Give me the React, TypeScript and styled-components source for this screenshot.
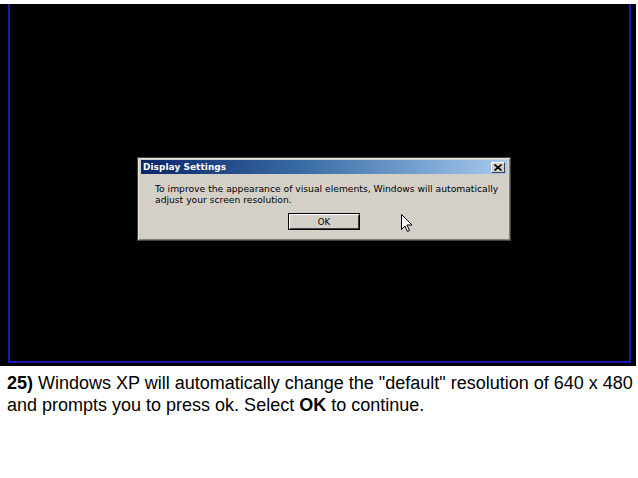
import styled, { createGlobalStyle } from 'styled-components';

const GlobalStyle = createGlobalStyle`
  html, body {
    margin: 0;
    padding: 0;
    background: #ffffff;
  }
  body {
    font-family: "Liberation Sans", Arial, sans-serif;
  }
`;

const Page = styled.div`
  width: 638px;
  height: 478px;
  padding-top: 4px;
  box-sizing: border-box;
  background: #ffffff;
`;

const Screen = styled.div`
  width: 636px;
  height: 362px;
  background: #000000;
  padding: 0 5px 3px 8px;
  box-sizing: border-box;
  display: flex;
`;

const Frame = styled.div`
  flex: 1;
  border: 2px solid #1a1ab0;
  border-top: none;
  padding: 153px 0 0 127px;
  box-sizing: border-box;
`;

const Dialog = styled.div`
  position: relative;
  width: 374px;
  height: 84px;
  box-sizing: border-box;
  background: #d4d0c8;
  border: 1px solid #404040;
  box-shadow: inset 1px 1px 0 #e8e6e0, inset -1px -1px 0 #808080;
  padding: 2px 3px;
  display: flex;
  flex-direction: column;
`;

const TitleBar = styled.div`
  height: 14px;
  background: linear-gradient(90deg, #0a246a 0%, #3a6ea5 45%, #a6caf0 100%);
  display: flex;
  align-items: center;
  justify-content: space-between;
  padding: 0 2px 0 2px;
`;

const Title = styled.span`
  color: #ffffff;
  font-family: "DejaVu Sans", Verdana, sans-serif;
  font-weight: bold;
  font-size: 8.9px;
  letter-spacing: 0.1px;
`;

const CloseButton = styled.div`
  width: 14px;
  height: 11px;
  box-sizing: border-box;
  background: #d4d0c8;
  border: 1px solid #404040;
  border-top-color: #ffffff;
  border-left-color: #ffffff;
  display: flex;
  align-items: center;
  justify-content: center;
`;

const Message = styled.p`
  margin: 9px 0 0 14px;
  font-family: "DejaVu Sans", Verdana, sans-serif;
  font-size: 9.2px;
  line-height: 11px;
  color: #000000;
  white-space: nowrap;
`;

const ButtonRow = styled.div`
  display: flex;
  justify-content: flex-start;
  padding-left: 147px;
  margin-top: 8px;
`;

const OkButton = styled.div`
  width: 72px;
  height: 17px;
  box-sizing: border-box;
  border: 1px solid #000000;
  box-shadow: inset 1px 1px 0 #ffffff, inset -1px -1px 0 #404040;
  background: #d4d0c8;
  display: flex;
  align-items: center;
  justify-content: center;
  font-family: "DejaVu Sans", Verdana, sans-serif;
  font-size: 8.6px;
  color: #000000;
`;

const Pointer = styled.svg`
  position: absolute;
  left: 263px;
  top: 56px;
`;

const Caption = styled.p`
  margin: 6px 0 0 7px;
  font-family: "Liberation Sans", Arial, sans-serif;
  font-size: 18px;
  line-height: 22px;
  color: #000000;
`;

export default function App() {
  return (
    <>
      <GlobalStyle />
      <Page>
        <Screen>
          <Frame>
            <Dialog>
              <TitleBar>
                <Title>Display Settings</Title>
                <CloseButton>
                  <svg width="8" height="7" viewBox="0 0 8 7">
                    <path d="M0.5 0.5 L7.5 6.5 M7.5 0.5 L0.5 6.5" stroke="#000" strokeWidth="1.6" />
                  </svg>
                </CloseButton>
              </TitleBar>
              <Message>
                To improve the appearance of visual elements, Windows will automatically
                <br />
                adjust your screen resolution.
              </Message>
              <ButtonRow>
                <OkButton>OK</OkButton>
              </ButtonRow>
              <Pointer width="12" height="19" viewBox="0 0 12 19">
                <path
                  d="M0.5 0.5 L0.5 15.5 L4 12 L6.5 17.5 L8.5 16.5 L6 11 L11 11 Z"
                  fill="#ffffff"
                  stroke="#000000"
                  strokeWidth="1"
                  strokeLinejoin="miter"
                />
              </Pointer>
            </Dialog>
          </Frame>
        </Screen>
        <Caption>
          <b>25)</b> Windows XP will automatically change the "default" resolution of 640 x 480
          <br />
          and prompts you to press ok. Select <b>OK</b> to continue.
        </Caption>
      </Page>
    </>
  );
}
